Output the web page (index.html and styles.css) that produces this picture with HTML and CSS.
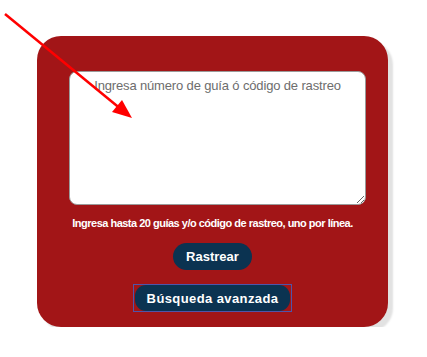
FILE: index.html
```html
<!DOCTYPE html>
<html lang="es">
<head>
    <meta charset="UTF-8">
    <title>Rastreo</title>
    <link rel="stylesheet" href="styles.css">
</head>
<body>
    <!-- flecha indicadora -->
    <svg class="pointer" width="140" height="125" viewBox="0 0 140 125">
        <line x1="5" y1="14" x2="122" y2="110" stroke="#ff0000" stroke-width="2.5"/>
        <polygon points="132,118 112,112 122,100" fill="#ff0000"/>
    </svg>

    <div class="card">
        <textarea class="guides" placeholder="Ingresa número de guía ó código de rastreo"></textarea>
        <p class="hint">Ingresa hasta 20 guías y/o código de rastreo, uno por línea.</p>
        <button class="btn track">Rastrear</button>
        <div class="focus-ring">
            <button class="btn advanced">Búsqueda avanzada</button>
        </div>
    </div>
</body>
</html>
```
FILE: styles.css
```css
body {
    margin: 0;
    font-family: "Liberation Sans", Arial, sans-serif;
    background-color: #fff;
}

.pointer {
    position: absolute;
    top: 0;
    left: 0;
    z-index: 10;
}

.card {
    box-sizing: border-box;
    margin: 36px 0 0 37px;
    width: 351px;
    height: 291px;
    padding-top: 35px;
    background-color: #a21517;
    border-radius: 24px;
    box-shadow: 5px 5px 2px #e2e2e2;
    display: flex;
    flex-direction: column;
    align-items: center;
}

.guides {
    box-sizing: border-box;
    width: 297px;
    height: 134px;
    margin-left: 10px;
    padding: 6px 8px;
    border: 1px solid #9a9a9a;
    border-radius: 8px;
    background: #fff;
    font-family: "Liberation Sans", Arial, sans-serif;
    font-size: 13px;
    letter-spacing: -0.15px;
    text-align: center;
    resize: both;
}

.guides::placeholder {
    color: #6d6d6d;
}

.hint {
    margin: 12px 0 0;
    color: #fff;
    font-size: 11px;
    font-weight: bold;
    letter-spacing: -0.5px;
}

.btn {
    background-color: #0b3351;
    color: #fff;
    border: none;
    font-family: "Liberation Sans", Arial, sans-serif;
    font-size: 13px;
    font-weight: bold;
    cursor: pointer;
}

.track {
    margin-top: 14px;
    height: 27px;
    padding: 0 13px;
    border-radius: 14px;
}

.focus-ring {
    margin-top: 14px;
    border: 1px solid #4f55aa;
    padding: 0 1px;
    display: flex;
}

.advanced {
    height: 26px;
    padding: 0 12px;
    border-radius: 11px;
    letter-spacing: 0.4px;
}
```
